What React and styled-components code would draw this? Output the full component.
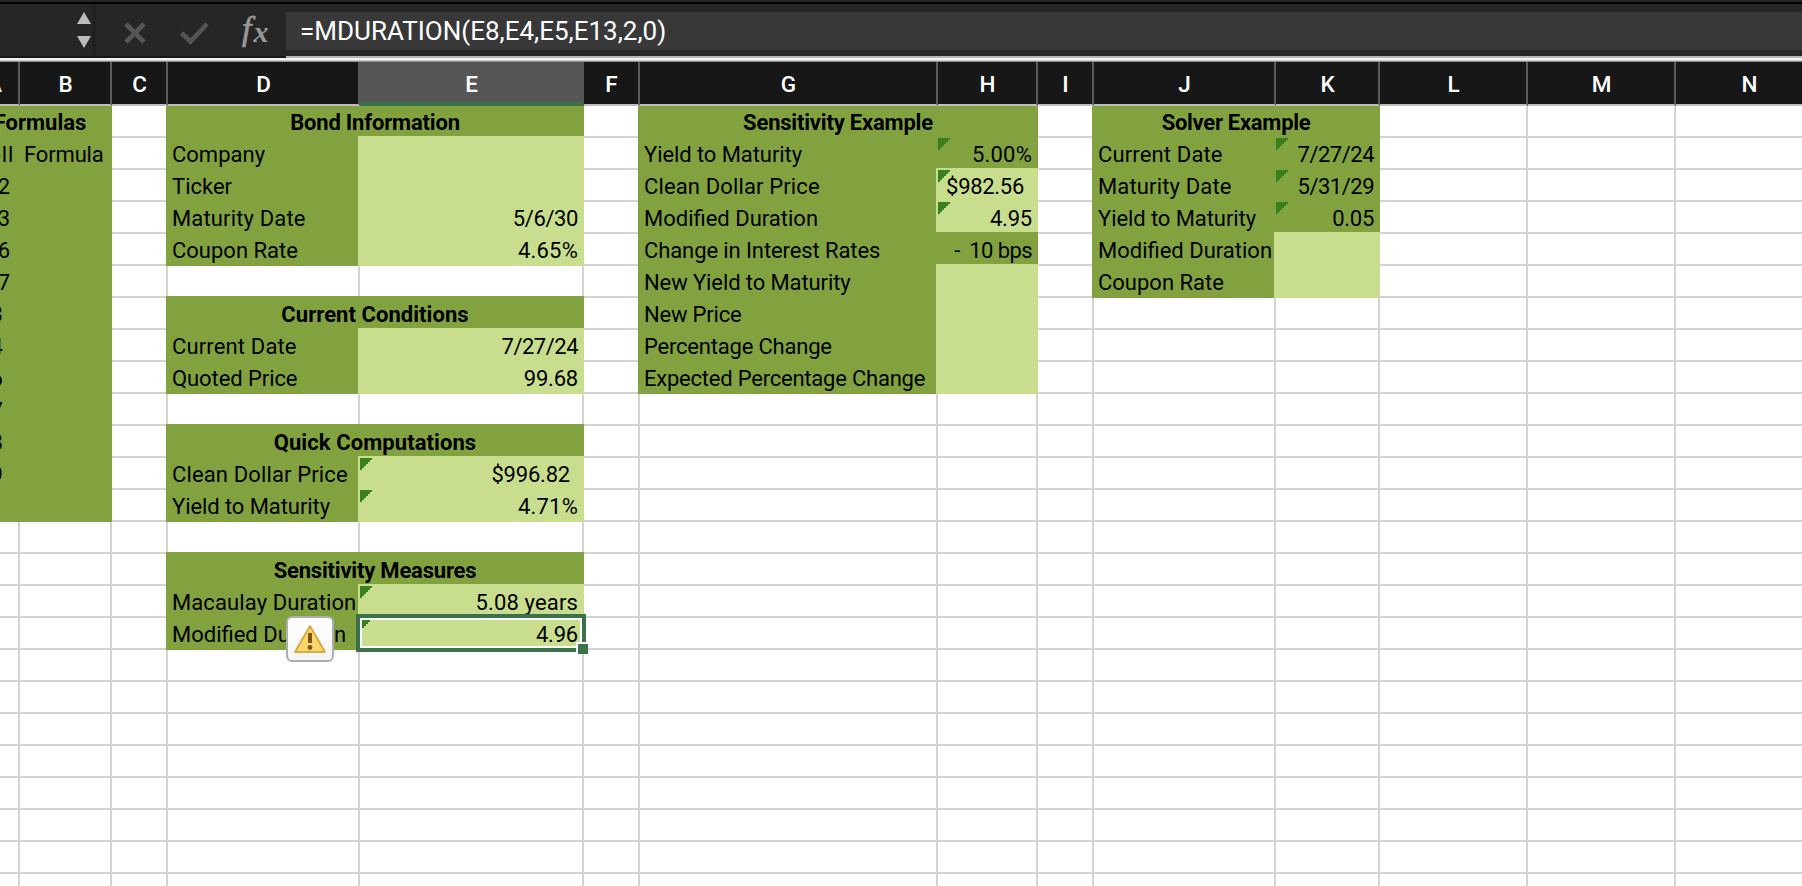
import React from 'react';
import styled, { createGlobalStyle } from 'styled-components';

const Global = createGlobalStyle`
  * { box-sizing: border-box; }
  body { margin: 0; background: #fff; overflow: hidden; }
`;

const GREEN = '#82a240';
const LIGHT = '#c8de8e';
const LINE = '#d3d3d3';
const ACCENT = '#3a7349';

const COLUMNS = [
  ['A', 50], ['B', 92], ['C', 56], ['D', 192], ['E', 224], ['F', 56], ['G', 298],
  ['H', 100], ['I', 56], ['J', 182], ['K', 104], ['L', 148], ['M', 148], ['N', 148],
];
const ROWS = 25;
const TRACKS = COLUMNS.map(([, w]) => w + 'px').join(' ');
// The sheet is scrolled sideways, so part of column A is out of view.
const SCROLL_X = 30;

const Page = styled.main`
  width: 1802px;
  height: 886px;
  overflow: hidden;
  background: #fff;
  font-family: Roboto, 'Liberation Sans', sans-serif;
  color: #000;
`;

const FormulaBar = styled.header`
  display: flex;
  height: 58px;
  background: #262626;
  border-top: 2px solid #262626;
  box-shadow: inset 0 2px #000, inset 0 -2px #161616;
`;

const NameBox = styled.div`
  width: 96px;
  margin-top: 4px;
  height: 50px;
  padding: 5px 1px 0 0;
  display: flex;
  justify-content: flex-end;
  border-right: 4px solid #202020;
  border-top: 1px solid #202020;
`;

const Actions = styled.div`
  width: 190px;
  padding-top: 4px;
`;

const InputArea = styled.div`
  flex: 1;
  padding-top: 10px;
  border-bottom: 2px solid #b5b5b5;
`;

const FormulaInput = styled.div`
  height: 38px;
  padding-left: 14px;
  background: #383838;
  color: #fff;
  font-size: 26px;
  font-weight: 400;
  line-height: 38px;
  white-space: pre;
  letter-spacing: ${(p) => p.$track}px;
`;

const Divider = styled.div`
  height: 4px;
  background: linear-gradient(#f2f2f2 0 2px, #c9c9c9 2px 3px, #8d908e 3px);
`;

const HeaderRow = styled.div`
  display: grid;
  grid-template-columns: ${TRACKS};
  width: max-content;
  margin-left: -${SCROLL_X}px;
  height: 44px;
  background: #171717;
`;

const HeaderCell = styled.div`
  display: flex;
  align-items: center;
  justify-content: center;
  padding: ${(p) => (p.$active ? 3 : 1)}px 0 0 1px;
  border-right: 2px solid ${(p) => (p.$active || p.$beforeActive ? '#555' : '#5b5b5b')};
  border-bottom: ${(p) => (p.$active ? `4px solid ${ACCENT}` : '2px solid #bdbdbd')};
  background: ${(p) => (p.$active ? '#555' : '#171717')};
  color: #fff;
  font-size: 22.5px;
  font-weight: 500;
`;

const Sheet = styled.div`
  display: grid;
  grid-template-columns: ${TRACKS};
  grid-template-rows: repeat(${ROWS}, 32px);
  width: max-content;
  margin-left: -${SCROLL_X}px;
`;

const EmptyCell = styled.div`
  grid-column: ${(p) => p.$col};
  grid-row: ${(p) => p.$row};
  border-right: 2px solid ${LINE};
  border-bottom: 2px solid ${LINE};
`;

const Cell = styled.div`
  position: relative;
  grid-column: ${(p) => p.$col} / span ${(p) => p.$span || 1};
  grid-row: ${(p) => p.$row};
  margin: ${(p) => (p.$row === 1 ? 0 : -2)}px 0 0 -2px;
  padding: 1px ${(p) => p.$pad ?? 6}px 0 6px;
  display: flex;
  align-items: flex-end;
  justify-content: ${(p) => p.$align || 'flex-start'};
  background: ${(p) => (p.$light ? LIGHT : GREEN)};
  font-size: 22px;
  font-weight: ${(p) => (p.$bold ? 700 : 400)};
  line-height: 31px;
  letter-spacing: ${(p) => p.$track || 0}px;
  white-space: pre;
`;

const ErrorMark = styled.i`
  position: absolute;
  left: ${(p) => (p.$inset ? 4 : 2)}px;
  top: ${(p) => (p.$inset ? 4 : 2)}px;
  width: ${(p) => (p.$inset ? 8 : 12)}px;
  height: ${(p) => (p.$inset ? 8 : 12)}px;
  background: #37821f;
  clip-path: ${(p) => (p.$inset
    ? 'polygon(0 0, 8px 0, 8px 2px, 6px 2px, 6px 4px, 4px 4px, 4px 6px, 2px 6px, 2px 8px, 0 8px)'
    : 'polygon(0 0, 12px 0, 12px 2px, 10px 2px, 10px 4px, 8px 4px, 8px 6px, 6px 6px, 6px 8px, 4px 8px, 4px 10px, 2px 10px, 2px 12px, 0 12px)')};
`;

const Selection = styled.div`
  position: relative;
  z-index: 2;
  grid-column: 5;
  grid-row: 17;
  margin: -4px -2px -2px -4px;
  border: 4px solid ${ACCENT};
  box-shadow: inset 0 0 0 2px #fff;
`;

const FillHandle = styled.i`
  position: absolute;
  right: -6px;
  bottom: -6px;
  width: 12px;
  height: 12px;
  background: ${ACCENT};
  border: 2px solid #fff;
  border-width: 2px 0 0 2px;
`;

const Warning = styled.div`
  position: relative;
  z-index: 3;
  grid-column: 4;
  grid-row: 17;
  justify-self: end;
  width: 48px;
  height: 46px;
  margin: -2px 26px 0 0;
  display: flex;
  align-items: center;
  justify-content: center;
  border: 2px solid #adadad;
  border-radius: 6px;
  background: linear-gradient(#fff, #f5f5f5);
`;

const LEFT = (col, row, text, track) => ({ col, row, text, track });
const RIGHT = (col, row, text, o = {}) => ({ col, row, text, align: 'flex-end', ...o });
const TITLE = (col, row, text, track) => ({ col, row, text, track, span: 2, bold: true, align: 'center' });

const CELLS = [
  TITLE(1, 1, 'Formulas', 0),
  LEFT(1, 2, 'Cell', 0.9), LEFT(2, 2, 'Formula', -0.15),
  ...['E12', 'E13', 'E16', 'E17'].map((t, i) => LEFT(1, i + 3, t, -0.5)),
  ...['H3', 'H4', 'H6', 'H7', 'H8', 'H9'].map((t, i) => LEFT(1, i + 7, t, 0.8)),
  LEFT(1, 13, ''),
  ...Array.from({ length: 11 }, (_, i) => LEFT(2, i + 3, '')),

  TITLE(4, 1, 'Bond Information', -0.18),
  LEFT(4, 2, 'Company'), RIGHT(5, 2, '', { light: true }),
  LEFT(4, 3, 'Ticker'), RIGHT(5, 3, '', { light: true }),
  LEFT(4, 4, 'Maturity Date', 0.15), RIGHT(5, 4, '5/6/30', { light: true, track: -0.4 }),
  LEFT(4, 5, 'Coupon Rate'), RIGHT(5, 5, '4.65%', { light: true, track: 0.2 }),
  TITLE(4, 7, 'Current Conditions', 0.05),
  LEFT(4, 8, 'Current Date', 0.15), RIGHT(5, 8, '7/27/24', { light: true, track: -0.5 }),
  LEFT(4, 9, 'Quoted Price', -0.08), RIGHT(5, 9, '99.68', { light: true, track: -0.2 }),
  TITLE(4, 11, 'Quick Computations', 0.08),
  LEFT(4, 12, 'Clean Dollar Price', 0.13), RIGHT(5, 12, '$996.82', { light: true, mark: true, pad: 14, track: -0.2 }),
  LEFT(4, 13, 'Yield to Maturity', -0.08), RIGHT(5, 13, '4.71%', { light: true, mark: true, track: 0.2 }),
  TITLE(4, 15, 'Sensitivity Measures', -0.2),
  LEFT(4, 16, 'Macaulay Duration', 0.1), RIGHT(5, 16, '5.08 years', { light: true, mark: true, track: 0.15 }),
  LEFT(4, 17, 'Modified Duration'), RIGHT(5, 17, '4.96', { light: true, mark: true, inset: true, track: -0.2 }),

  TITLE(7, 1, 'Sensitivity Example', -0.2),
  LEFT(7, 2, 'Yield to Maturity', -0.08), RIGHT(8, 2, '5.00%', { mark: true, track: 0.2 }),
  LEFT(7, 3, 'Clean Dollar Price', 0.13), RIGHT(8, 3, '$982.56', { light: true, mark: true, pad: 14, track: -0.3 }),
  LEFT(7, 4, 'Modified Duration'), RIGHT(8, 4, '4.95', { light: true, mark: true, track: -0.2 }),
  LEFT(7, 5, 'Change in Interest Rates', -0.1), RIGHT(8, 5, '-  10 bps', { track: -0.6 }),
  LEFT(7, 6, 'New Yield to Maturity', -0.1), RIGHT(8, 6, '', { light: true }),
  LEFT(7, 7, 'New Price', -0.2), RIGHT(8, 7, '', { light: true }),
  LEFT(7, 8, 'Percentage Change', -0.2), RIGHT(8, 8, '', { light: true }),
  LEFT(7, 9, 'Expected Percentage Change', -0.22), RIGHT(8, 9, '', { light: true }),

  TITLE(10, 1, 'Solver Example', -0.28),
  LEFT(10, 2, 'Current Date', 0.15), RIGHT(11, 2, '7/27/24', { mark: true, track: -0.5 }),
  LEFT(10, 3, 'Maturity Date', 0.15), RIGHT(11, 3, '5/31/29', { mark: true, track: -0.5 }),
  LEFT(10, 4, 'Yield to Maturity', -0.08), RIGHT(11, 4, '0.05', { mark: true, track: -0.3 }),
  LEFT(10, 5, 'Modified Duration'), RIGHT(11, 5, '', { light: true }),
  LEFT(10, 6, 'Coupon Rate'), RIGHT(11, 6, '', { light: true }),
];

const SLOTS = Array.from({ length: ROWS * COLUMNS.length }, (_, i) => ({
  col: (i % COLUMNS.length) + 1,
  row: Math.floor(i / COLUMNS.length) + 1,
}));

export default function App() {
  return (
    <Page>
      <Global />
      <FormulaBar>
        <NameBox>
          <svg width="14" height="38" viewBox="0 0 14 38" fill="#bdbdbd">
            <path d="M7 0 14 12H0zM0 24h14L7 36z" />
          </svg>
        </NameBox>
        <Actions>
          <svg width="190" height="50" viewBox="0 0 190 50">
            <path d="M30 18 48 36M48 18 30 36" stroke="#555" strokeWidth="4.6" fill="none" />
            <path d="M85.5 27 94.5 35.5 111 18" stroke="#555" strokeWidth="4.6" fill="none" />
            <g fontFamily="'Liberation Serif', serif" fontStyle="italic" fill="#999" stroke="#999" strokeWidth="0.7">
              <text x="146" y="34" fontSize="34">f</text>
              <text x="157.5" y="36" fontSize="30" fontWeight="700" strokeWidth="0">x</text>
            </g>
          </svg>
        </Actions>
        <InputArea>
          <FormulaInput $track={0}>=MDURATION(E8,E4,E5,E13,2,0)</FormulaInput>
        </InputArea>
      </FormulaBar>
      <Divider />
      <HeaderRow>
        {COLUMNS.map(([name], i) => (
          <HeaderCell key={name} $active={name === 'E'} $beforeActive={COLUMNS[i + 1]?.[0] === 'E'}>{name}</HeaderCell>
        ))}
      </HeaderRow>
      <Sheet>
        {SLOTS.map((s) => <EmptyCell key={`${s.col}-${s.row}`} $col={s.col} $row={s.row} />)}
        {CELLS.map((c) => (
          <Cell key={`${c.col}-${c.row}`} $col={c.col} $row={c.row} $span={c.span} $light={c.light}
            $bold={c.bold} $align={c.align} $pad={c.pad} $track={c.track}>
            {c.mark && <ErrorMark $inset={c.inset} />}
            {c.text}
          </Cell>
        ))}
        <Selection><FillHandle /></Selection>
        <Warning>
          <svg width="34" height="30" viewBox="0 0 34 30">
            <path d="M17 2 32 28H2z" fill="#f8d76c" stroke="#d9ab45" strokeWidth="2" strokeLinejoin="round" />
            <path d="M17 9v10" stroke="#7a5418" strokeWidth="4" />
            <circle cx="17" cy="23.5" r="2.4" fill="#7a5418" />
          </svg>
        </Warning>
      </Sheet>
    </Page>
  );
}
